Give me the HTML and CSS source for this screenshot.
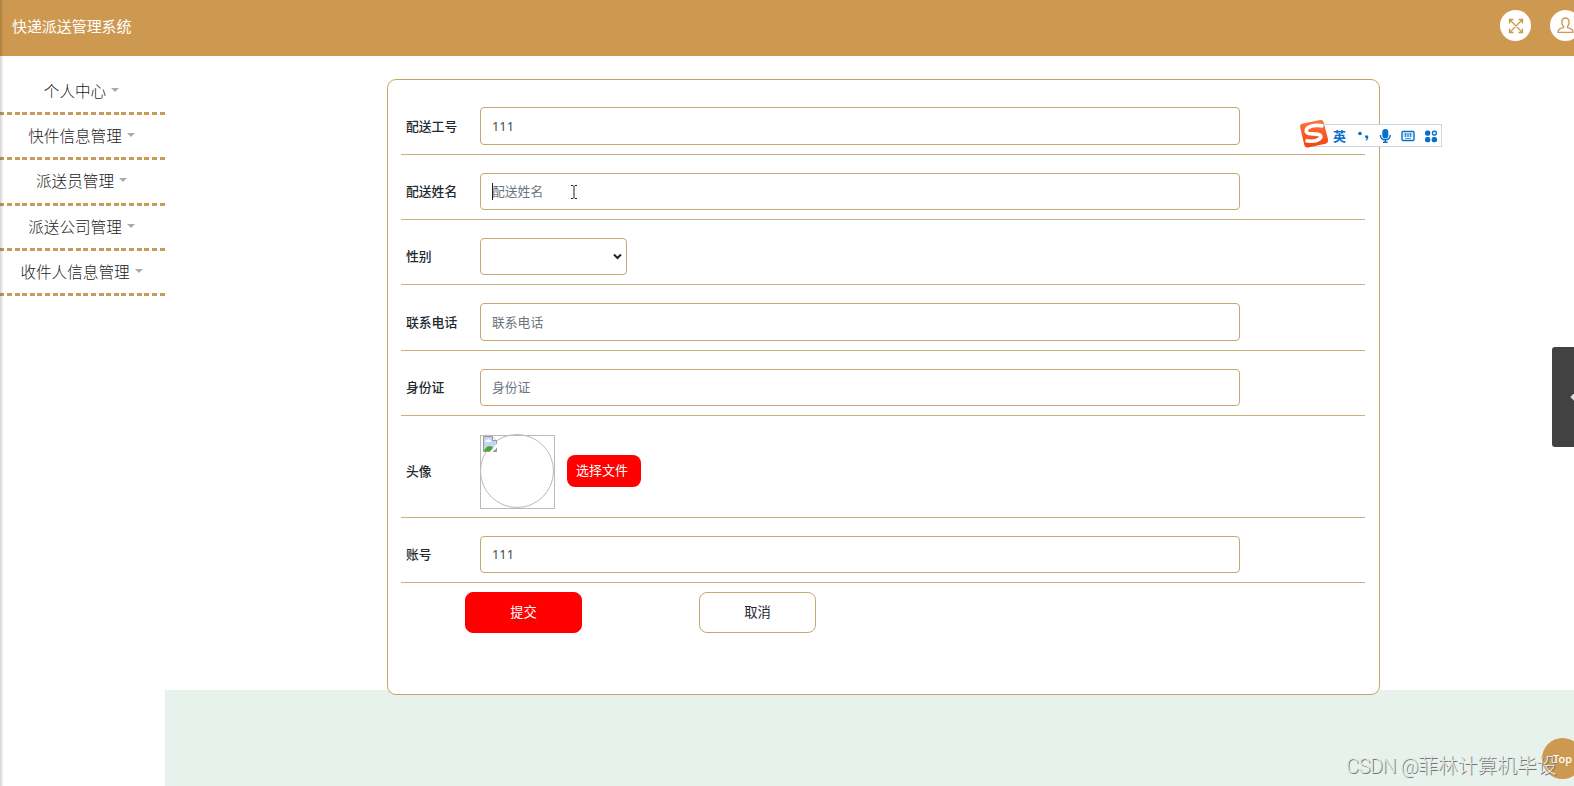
FILE: index.html
```html
<!DOCTYPE html>
<html lang="zh-CN">
<head>
<meta charset="utf-8">
<title>快递派送管理系统</title>
<link rel="stylesheet" href="styles.css">
</head>
<body>
<header class="topbar">
  <h1 class="brand">快递派送管理系统</h1>
  <div class="actions">
    <span class="round"><svg width="16" height="16" viewBox="0 0 16 16"><path d="M1.500 5.500v-4h4M10.500 1.500h4v4M14.500 10.500v4h-4M5.500 14.500h-4v-4M1.500 1.500l13 13M14.500 1.500l-13 13"/></svg></span>
    <span class="round"><svg width="17" height="17" viewBox="0 0 17 17"><path d="M6.600 9.500C5 8 4.700 5.800 5 4c.4-2 1.700-3 3.500-3s3.100 1 3.500 3c.3 1.800 0 4-1.600 5.500v1.200c2.800.5 5.600 1.400 5.600 4.600H1c0-3.200 2.800-4.100 5.600-4.600z"/></svg></span>
  </div>
</header>
<div class="body">
  <nav class="sidebar">
    <a class="item">个人中心<i class="caret"></i></a>
    <a class="item">快件信息管理<i class="caret"></i></a>
    <a class="item">派送员管理<i class="caret"></i></a>
    <a class="item">派送公司管理<i class="caret"></i></a>
    <a class="item">收件人信息管理<i class="caret"></i></a>
  </nav>
  <main class="main">
    <form class="panel">
      <div class="row"><label class="label">配送工号</label><div class="field tall">111</div></div>
      <div class="row"><label class="label">配送姓名</label><div class="field hint"><i class="text-caret"></i>配送姓名</div></div>
      <div class="row"><label class="label">性别</label><div class="field select"><svg width="9" height="7" viewBox="0 0 9 7"><path d="M1 1.500l3.500 3.500L8 1.500"/></svg></div></div>
      <div class="row large"><label class="label">联系电话</label><div class="field tall hint">联系电话</div></div>
      <div class="row"><label class="label">身份证</label><div class="field hint">身份证</div></div>
      <div class="row photo"><label class="label">头像</label>
        <div class="avatar"><svg width="75" height="75" viewBox="0 0 75 75">
          <rect x="0.500" y="1.500" width="74" height="73" class="frame"/>
          <circle cx="37" cy="37" r="36.500" class="frame"/>
          <path d="M3.500 2.500h9l4 4V17.500h-13z" fill="#c3d5f3" stroke="#999"/>
          <path d="M12.500 2.500v4h4" fill="#fff" stroke="#999"/>
          <path d="M5 8q0-2 2-2 1-2 3 0 2 0 1 2z" fill="#fff"/>
          <path d="M4 17q2-5 6-5 4 1 6 5z" fill="#4ca634"/>
          <path d="M17.500 9l-8 9h3l5-5z" fill="#fff"/>
        </svg></div>
        <span class="upload">选择文件</span></div>
      <div class="row"><label class="label">账号</label><div class="field">111</div></div>
      <div class="buttons"><span class="btn primary">提交</span><span class="btn">取消</span></div>
    </form>
  </main>
</div>
<i class="edge"></i>
<svg class="pointer" width="8" height="14" viewBox="0 0 8 14"><path d="M1 .5h2l1 1 1-1h2M4 1.500v11M1 13.500h2l1-1 1 1h2"/></svg>
<div class="ime">
  <span class="ime-text">英</span>
  <svg width="102" height="21" viewBox="0 0 102 21">
    <circle cx="6" cy="8.500" r="1.800"/><path d="M11.200 10.500h3v2.500q-.3 2-2.400 2.700v-1.200q.8-.5.8-1.500h-1.400z"/>
    <rect x="28.300" y="4" width="6" height="9.500" rx="3"/><path class="line" d="M26.300 10q.2 4.800 5 4.800T36.300 10M31.300 15v3M29 17.300h4.600"/>
    <rect class="line" x="48" y="6.500" width="12" height="9" rx="1"/><path class="thin" d="M49.500 9h9M49.500 11h9M51 13.500h6M51.500 8v4M54 8v4M56.500 8v4"/>
    <rect x="71" y="5.500" width="5.300" height="5.300" rx="2"/><rect class="line" x="78.500" y="6.200" width="3.800" height="3.800" rx="1.500"/><rect x="71" y="12" width="5.300" height="5.300" rx="2"/><rect x="77.700" y="12" width="5.300" height="5.300" rx="2"/>
  </svg>
</div>
<svg class="sogou" width="30" height="30" viewBox="0 0 30 30">
  <defs><linearGradient id="g" x2="0" y2="1"><stop stop-color="#ff7440"/><stop offset="1" stop-color="#ed4510"/></linearGradient></defs>
  <path d="M4 4.500L21 1q3-.5 3.600 2L29 20q.8 3.500-2.500 4.800L9 28.500q-3 .5-3.700-2.500L1.200 8.500Q.5 5.200 4 4.500z" fill="url(#g)"/>
  <path d="M24.500 7Q14 5 8.500 9q-3.500 4 1.500 5.500l9 .8q5 1.500 1.500 4.700-5 3.500-14 1.500" fill="none" stroke="#fff" stroke-width="3.700"/>
</svg>
<div class="drawer"><i class="drawer-mark"></i></div>
<div class="to-top">Top</div>
<div class="watermark">CSDN @<span class="author">菲林计算机毕设</span></div>
</body>
</html>
```
FILE: styles.css
```css
* { box-sizing: border-box; }
body {
  margin: 0;
  height: 786px;
  overflow: hidden;
  position: relative;
  background: #fff;
  font: 13px/20px "Noto Sans", "Noto Sans CJK SC", sans-serif;
  color: #222a30;
}
svg { display: block; flex: none; }
.topbar {
  height: 56px;
  background: #cd9950;
  display: flex;
  justify-content: space-between;
  padding: 10px 0 0 12px;
}
.brand { margin: 5px 0 0; font: 400 14.95px/22px "Noto Sans CJK SC", sans-serif; color: #fff; }
.actions { display: flex; gap: 19px; width: 74px; }
.round {
  flex: none;
  width: 31px;
  height: 31px;
  border-radius: 50%;
  background: #fff;
  display: flex;
  align-items: center;
  justify-content: center;
}
.round path { fill: none; stroke: #cd9950; stroke-width: 1.3; }
.body { display: flex; height: 730px; }
.sidebar { width: 165px; padding-top: 14px; }
.item {
  display: flex;
  align-items: center;
  justify-content: center;
  height: 45.2px;
  padding: 0 2px 5px 0;
  font: 300 15.6px/24px "Noto Sans CJK SC", sans-serif;
  color: #222;
  background: repeating-linear-gradient(90deg, #c79c58 0 5px, transparent 5px 7.63px) -0.7px 100% / 166px 3px no-repeat;
}
.caret { margin: 0 0 0 5px; border: 4px solid transparent; border-top-color: #aaa; border-bottom: 0; }
.main {
  flex: 1;
  padding: 23px 0 0 222px;
  background: linear-gradient(#fff 634px, #e7f2ec 634px);
}
.panel {
  width: 993px;
  height: 616px;
  padding: 10px 14px 0 13px;
  border: 1px solid #c4a566;
  border-radius: 9px;
  background: #fff;
}
.row {
  display: flex;
  align-items: flex-end;
  height: 65px;
  padding: 0 0 9px 5px;
  border-bottom: 1px solid #cbb17c;
}
.row.large { height: 66px; }
.row.photo { height: 102px; padding-bottom: 8px; }
.label { width: 74px; font-weight: 500; font-family: "Noto Sans CJK SC", sans-serif; font-size: 12.8px; padding-bottom: 9px; }
.photo .label { padding-bottom: 28px; }
.field {
  position: relative;
  width: 760px;
  height: 37px;
  padding: 7px 11px;
  border: 1px solid #c6a872;
  border-radius: 4px;
  font-size: 12.8px;
  color: #495057;
}
.tall { height: 38px; padding-top: 8px; }
.hint { color: #6c757d; }
.select { width: 147px; display: flex; justify-content: flex-end; align-items: center; padding-right: 4px; }
.select path { fill: none; stroke: #222; stroke-width: 2; }
.text-caret { position: absolute; left: 11px; top: 9px; width: 1px; height: 17px; background: #222; }
.frame { fill: none; stroke: #bbb; }
.upload {
  width: 74px;
  height: 32px;
  margin: 0 0 22px 12px;
  border-radius: 8px;
  background: #f00;
  color: #fff;
  text-align: center;
  line-height: 30px;
  padding-right: 4px;
}
.buttons { display: flex; gap: 117px; padding: 9px 0 0 64px; }
.btn {
  width: 117px;
  height: 41px;
  border: 1px solid #c6a872;
  border-radius: 8px;
  text-align: center;
  font-size: 13.300px;
  line-height: 39px;
}
.primary { background: #f00; border-color: #f00; color: #fff; }
.edge {
  position: absolute;
  left: 0;
  top: 0;
  width: 3px;
  height: 786px;
  background: linear-gradient(90deg, rgba(0, 0, 0, .17), rgba(0, 0, 0, .04));
}
.pointer { position: absolute; left: 570px; top: 185px; }
.pointer path { fill: none; stroke: #222; }
.ime {
  position: absolute;
  left: 1309px;
  top: 124px;
  width: 133px;
  height: 23px;
  padding-left: 23px;
  display: flex;
  background: #fff;
  border: 1px solid #ccd6e2;
  color: #0870ca;
}
.ime-text { font: 700 13px/21px "Noto Sans CJK SC", sans-serif; width: 21px; }
.ime svg { fill: #0870ca; margin-right: -20px; }
.ime .line { fill: none; stroke: #0870ca; stroke-width: 1.4; }
.ime .thin { fill: none; stroke: #0870ca; stroke-width: .7; }
.sogou { position: absolute; left: 1299px; top: 119px; }
.drawer {
  position: absolute;
  right: 0;
  top: 347px;
  width: 22px;
  height: 100px;
  border-radius: 3px 0 0 3px;
  background: #424242;
  overflow: hidden;
}
.drawer-mark { position: absolute; left: 20px; top: 46px; width: 8px; height: 8px; background: #ddd; transform: rotate(45deg); }
.to-top {
  position: absolute;
  left: 1542px;
  top: 738px;
  width: 41px;
  height: 41px;
  border-radius: 50%;
  background: #cd9950;
  color: #fff;
  font-size: 11px;
  font-weight: 500;
  line-height: 42px;
  padding-left: 11px;
}
.watermark {
  position: absolute;
  left: 1346px;
  top: 753px;
  font: 300 19.900px/28px Roboto, "Noto Sans CJK SC", sans-serif;
  letter-spacing: -.5px;
  color: #e4e9e6;
  white-space: nowrap;
  text-shadow: 1px 1px 0 #777;
}
.author { letter-spacing: -.1px; }
```
